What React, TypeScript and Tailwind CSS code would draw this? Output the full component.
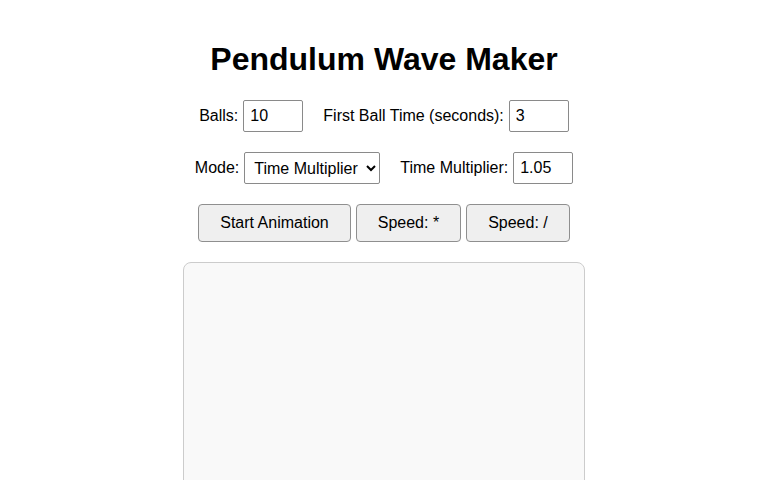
import { useState } from 'react'

export default function App() {
  const [balls, setBalls] = useState('10')
  const [firstTime, setFirstTime] = useState('3')
  const [mode, setMode] = useState('multiplier')
  const [multiplier, setMultiplier] = useState('1.05')

  const input = 'h-8 w-[60px] rounded-[2px] border border-[#8a8a8a] bg-white px-[6px] text-base text-black outline-none'
  const button = 'h-[38px] rounded-[4px] border border-[#8f8f8f] bg-[#efefef] px-[21px] text-base text-black'

  return (
    <div className="flex min-h-screen flex-col items-center bg-white pt-[41px] font-['Liberation_Sans',Arial,sans-serif] text-base text-black">
      <h1 className="mb-[22px] text-[32px] font-bold leading-[37px]">Pendulum Wave Maker</h1>

      {/* ── settings ── */}
      <div className="flex h-8 items-center">
        <label className="flex items-center gap-[5px]">
          Balls:
          <input className={input} value={balls} onChange={e => setBalls(e.target.value)} />
        </label>
        <label className="ml-5 flex items-center gap-[5px]">
          First Ball Time (seconds):
          <input className={input} value={firstTime} onChange={e => setFirstTime(e.target.value)} />
        </label>
      </div>

      <div className="mt-5 flex h-8 items-center">
        <label className="flex items-center gap-[5px]">
          Mode:
          <select
            className="h-8 w-[136px] rounded-[2px] border border-[#8a8a8a] bg-white pl-[5px] text-base text-black"
            value={mode}
            onChange={e => setMode(e.target.value)}
          >
            <option value="multiplier">Time Multiplier</option>
            <option value="linear">Linear</option>
          </select>
        </label>
        <label className="ml-5 flex items-center gap-[5px]">
          Time Multiplier:
          <input className={input} value={multiplier} onChange={e => setMultiplier(e.target.value)} />
        </label>
      </div>

      {/* ── controls ── */}
      <div className="mt-5 flex gap-[5px]">
        <button className={button}>Start Animation</button>
        <button className={button}>Speed: *</button>
        <button className={button}>Speed: /</button>
      </div>

      {/* ── canvas ── */}
      <div className="mt-5 h-[400px] w-[402px] rounded-lg border border-[#cccccc] bg-[#f9f9f9]" />
    </div>
  )
}
